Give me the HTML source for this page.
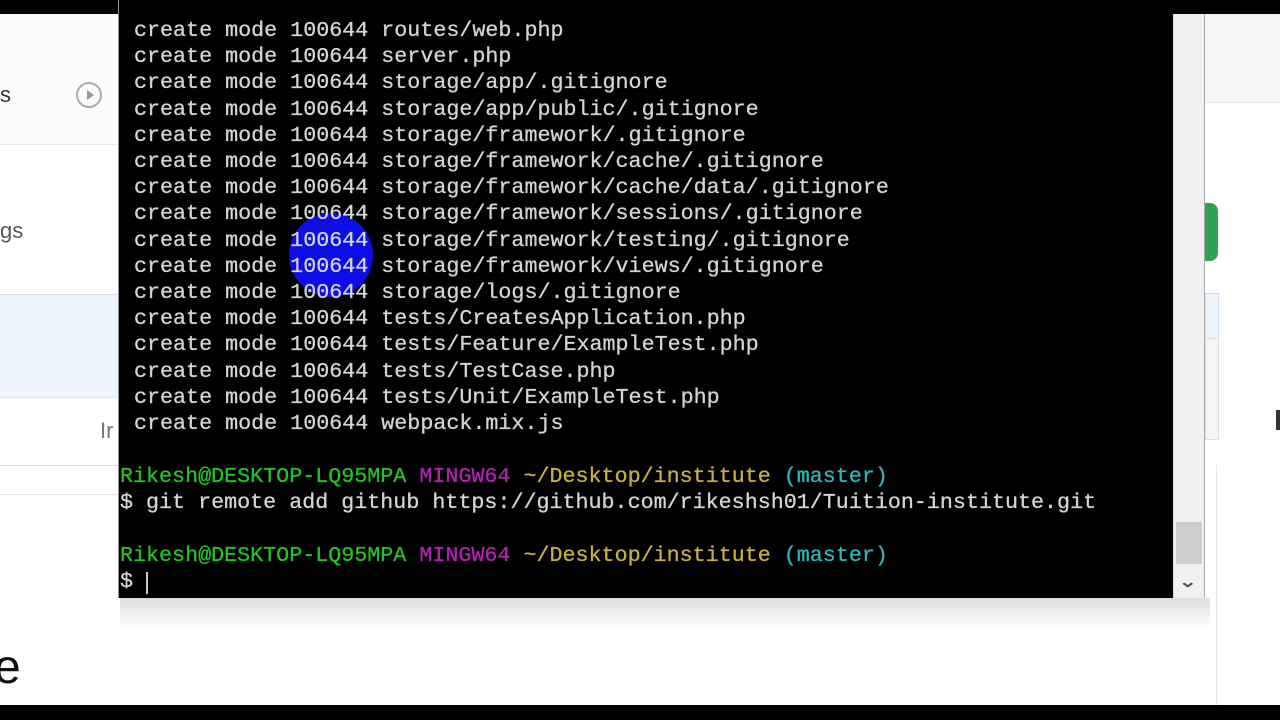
<!DOCTYPE html>
<html><head><meta charset="utf-8"><style>
body{margin:0;width:1280px;height:720px;overflow:hidden;background:#fff;position:relative;font-family:"Liberation Sans",sans-serif}
.abs{position:absolute}
#term{left:118px;top:0;width:1055px;height:598px;background:#000;}
#sb{left:1173px;top:14px;width:32px;height:584px;background:#f0f0f0;border-left:1px solid #ddd;border-right:1px solid #aaa;box-sizing:border-box}
.ln{position:absolute;left:0;font-family:"Liberation Mono",monospace;font-size:21.7px;line-height:26.2px;white-space:pre;color:#d4d4d4;letter-spacing:0;-webkit-text-stroke:0.3px currentColor}
.g{color:#22c322}.m{color:#b520b5}.y{color:#c8b040}.c{color:#2cb8b8}
</style></head><body>
<div class="abs" style="left:0;top:0;width:1280px;height:14px;background:#000"></div>
<div class="abs" style="left:0;top:705px;width:1280px;height:15px;background:#000"></div>
<div class="abs" style="left:0;top:14px;width:120px;height:130px;background:#fbfbfb;border-bottom:1px solid #e6e6e6"></div>
<div class="abs" style="left:0;top:82px;font-size:22px;color:#333">s</div>
<div class="abs" style="left:76px;top:82px;width:26px;height:26px;border:2px solid #aaa;border-radius:50%;box-sizing:border-box"></div>
<div class="abs" style="left:87px;top:90px;width:0;height:0;border-left:7px solid #999;border-top:5px solid transparent;border-bottom:5px solid transparent"></div>
<div class="abs" style="left:0;top:218px;font-size:22px;color:#555">gs</div>
<div class="abs" style="left:0;top:294px;width:120px;height:102px;background:#eef4fb;border-top:1px solid #cfdeef;border-bottom:1px solid #e6e6e6"></div>
<div class="abs" style="left:100px;top:418px;font-size:22px;color:#777">Ir</div>
<div class="abs" style="left:0;top:465px;width:120px;height:1px;background:#ddd"></div>
<div class="abs" style="left:0;top:494px;width:120px;height:1px;background:#e5e5e5"></div>
<div class="abs" style="left:-6px;top:640px;font-size:48px;color:#111">e</div>
<div class="abs" style="left:1205px;top:14px;width:75px;height:88px;background:#f6f6f6;border-bottom:1px solid #e5e5e5"></div>
<div class="abs" style="left:1205px;top:203px;width:13px;height:58px;background:#2ea44f;border-radius:0 8px 8px 0"></div>
<div class="abs" style="left:1205px;top:293px;width:12px;height:45px;background:#eef4fb;border:1px solid #cfdeef"></div>
<div class="abs" style="left:1205px;top:338px;width:12px;height:100px;background:#f5f5f5;border:1px solid #ddd"></div>
<div class="abs" style="left:1216px;top:465px;width:1px;height:240px;background:#e5e5e5"></div>
<div class="abs" style="left:1276px;top:410px;width:4px;height:20px;background:#333"></div>
<div class="abs" style="left:120px;top:598px;width:1090px;height:30px;background:linear-gradient(#ddd,#fff)"></div>
<div id="term" class="abs" style="border-left:1px solid #999"></div>
<div id="sb" class="abs"></div>
<div class="abs" style="left:1176px;top:522px;width:26px;height:42px;background:#cdcdcd"></div>
<div class="abs" style="left:1181px;top:572px;font-size:16px;color:#555;font-weight:bold;transform:scaleX(1.4)">&#8964;</div>
<div class="abs" style="left:289px;top:213px;width:84px;height:84px;border-radius:50%;background:#0d0de8"></div>
<div class="abs" style="left:134px;top:18px;width:1000px">
<div class="ln" style="top:0">create mode 100644 routes/web.php</div>
<div class="ln" style="top:26.2px">create mode 100644 server.php</div>
<div class="ln" style="top:52.4px">create mode 100644 storage/app/.gitignore</div>
<div class="ln" style="top:78.6px">create mode 100644 storage/app/public/.gitignore</div>
<div class="ln" style="top:104.8px">create mode 100644 storage/framework/.gitignore</div>
<div class="ln" style="top:131px">create mode 100644 storage/framework/cache/.gitignore</div>
<div class="ln" style="top:157.2px">create mode 100644 storage/framework/cache/data/.gitignore</div>
<div class="ln" style="top:183.4px">create mode 100644 storage/framework/sessions/.gitignore</div>
<div class="ln" style="top:209.6px">create mode 100644 storage/framework/testing/.gitignore</div>
<div class="ln" style="top:235.8px">create mode 100644 storage/framework/views/.gitignore</div>
<div class="ln" style="top:262px">create mode 100644 storage/logs/.gitignore</div>
<div class="ln" style="top:288.2px">create mode 100644 tests/CreatesApplication.php</div>
<div class="ln" style="top:314.4px">create mode 100644 tests/Feature/ExampleTest.php</div>
<div class="ln" style="top:340.6px">create mode 100644 tests/TestCase.php</div>
<div class="ln" style="top:366.8px">create mode 100644 tests/Unit/ExampleTest.php</div>
<div class="ln" style="top:393px">create mode 100644 webpack.mix.js</div>
</div>
<div class="abs" style="left:120px;top:464px;width:1050px">
<div class="ln" style="top:0"><span class="g">Rikesh@DESKTOP-LQ95MPA</span> <span class="m">MINGW64</span> <span class="y">~/Desktop/institute</span> <span class="c">(master)</span></div>
<div class="ln" style="top:26.2px">$ git remote add github https://github.com/rikeshsh01/Tuition-institute.git</div>
<div class="ln" style="top:78.6px"><span class="g">Rikesh@DESKTOP-LQ95MPA</span> <span class="m">MINGW64</span> <span class="y">~/Desktop/institute</span> <span class="c">(master)</span></div>
<div class="ln" style="top:104.8px">$ </div>
</div>
<div class="abs" style="left:146px;top:572px;width:2px;height:22px;background:#ccc"></div>
</body></html>
